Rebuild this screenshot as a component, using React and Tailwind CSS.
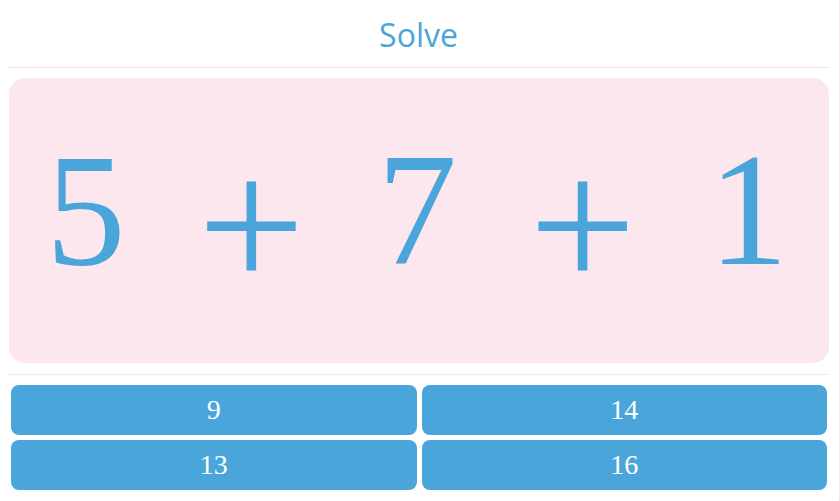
export default function App() {
  const answers = ["9", "14", "13", "16"];
  return (
    <div className="w-[840px] h-[501px] bg-white border-r border-dotted border-[#f3d9e2] overflow-hidden">
      <div className="ml-2 w-[821px] flex flex-col">
        <div className="h-[68px] flex items-center justify-center border-b border-[#fbe3ea]">
          <span className="text-[32px] leading-none text-[#4aa6da] pt-[2px] font-['Open_Sans',sans-serif]">
            Solve
          </span>
        </div>
        <div className="pt-[10px] pb-[11px] border-b border-[#fbe3ea] pl-[1px]">
          <div className="h-[285px] rounded-2xl bg-[#fce7ee] flex items-center justify-center gap-[72px] pb-[21px] pr-[4px] text-[#4aa6da] leading-none font-['Liberation_Serif','Times_New_Roman',Times,serif]">
            <span className="text-[160px]">5</span>
            <span className="text-[190px] translate-y-[16px]">+</span>
            <span className="text-[160px]">7</span>
            <span className="text-[190px] translate-y-[16px]">+</span>
            <span className="text-[160px]">1</span>
          </div>
        </div>
        <div className="pt-[10px] pl-[3px] pr-[2px] grid grid-cols-2 gap-x-[5px] gap-y-[5px]">
          {answers.map((a) => (
            <div
              key={a}
              className="h-[50px] rounded-lg bg-[#4aa6da] text-white flex items-center justify-center text-[28px] leading-none font-['Liberation_Serif','Times_New_Roman',Times,serif]"
            >
              {a}
            </div>
          ))}
        </div>
      </div>
    </div>
  );
}
